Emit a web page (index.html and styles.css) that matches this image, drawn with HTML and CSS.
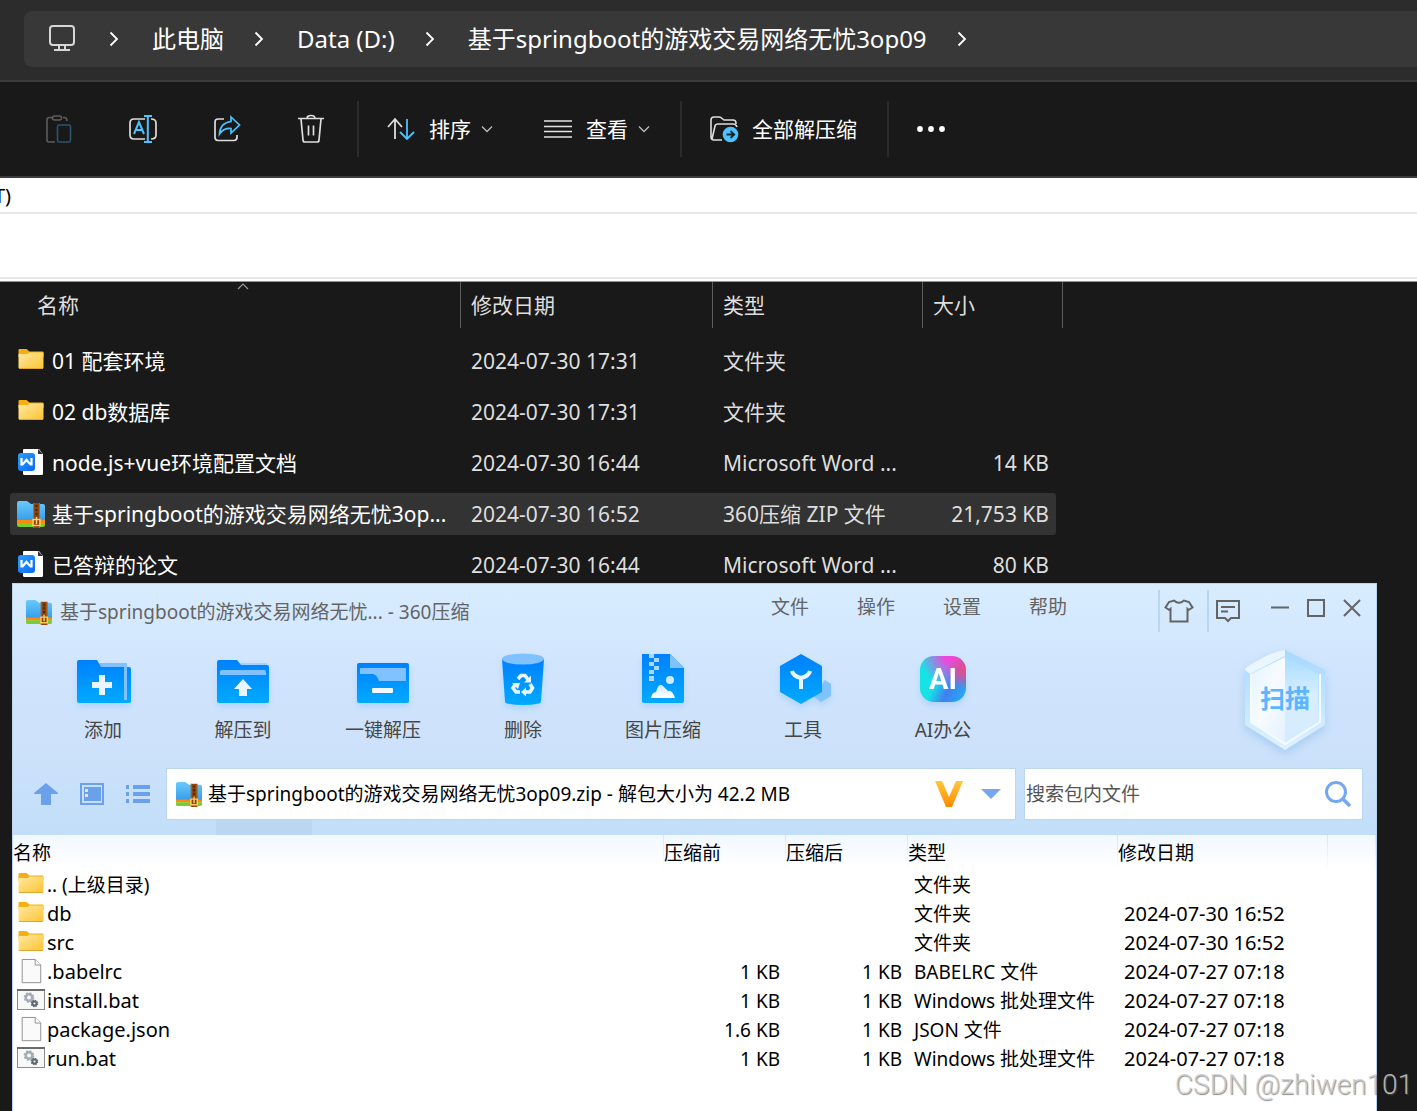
FILE: index.html
```html
<!doctype html>
<html lang="zh-CN">
	<head>
		<meta charset="utf-8">
		<title>基于springboot的游戏交易网络无忧3op09</title>
		<link rel="stylesheet" href="styles.css">
	</head>
	<body>

		<svg class="sprite" aria-hidden="true">
			<defs>
				<linearGradient id="g-folder" x1="0" y1="0" x2="1" y2="1">
					<stop offset="0" stop-color="#ffe9a2"/><stop offset="1" stop-color="#fdc433"/>
				</linearGradient>
				<linearGradient id="g-sky" x1="0" y1="0" x2="0" y2="1">
					<stop offset="0" stop-color="#69cbfb"/><stop offset="1" stop-color="#3499ea"/>
				</linearGradient>
				<linearGradient id="g-blue" x1="0" y1="0" x2="0" y2="1">
					<stop offset="0" stop-color="#0080ff"/><stop offset="1" stop-color="#00aaff"/>
				</linearGradient>
				<linearGradient id="g-word" x1="0" y1="0" x2="1" y2="1">
					<stop offset="0" stop-color="#2ba0ff"/><stop offset="1" stop-color="#0a68f5"/>
				</linearGradient>
				<linearGradient id="g-white" x1="0" y1="0" x2="0" y2="1">
					<stop offset="0" stop-color="#cfe9ff"/><stop offset="1" stop-color="#fff"/>
				</linearGradient>
				<linearGradient id="g-orange" x1="0" y1="0" x2="0" y2="1">
					<stop offset="0" stop-color="#ffc83c"/><stop offset="1" stop-color="#ff8a00"/>
				</linearGradient>
			</defs>
			<symbol id="i-next" viewBox="0 0 10 16">
				<path d="M1.500 1.500 8 8l-6.500 6.500" fill="none" stroke="#fff" stroke-width="1.800"/>
			</symbol>
			<symbol id="i-down" viewBox="0 0 12 8">
				<path d="M1 1.500l5 5 5-5" fill="none" stroke="#bbb" stroke-width="1.300"/>
			</symbol>
			<symbol id="i-folder" viewBox="0 2 28 22" overflow="visible">
				<path d="M1.500 2q0-1 1-1h7l3 2.500h13q1 0 1 1V9h-25z" fill="#f5ae14"/>
				<path d="M1.500 6h9l2-1.500h14V19.500q0 1-1 1h-23q-1 0-1-1z" fill="url(#g-folder)"/>
				<path d="M2 20.500h24" stroke="#dfa72c"/>
			</symbol>
			<symbol id="i-word" viewBox="0 0 28 28">
				<path d="M7 0h15l4 5v19.500q0 1.500-1.500 1.500h-17Q6 26 6 24.500V1q0-1 1-1z" fill="#fff"/>
				<path d="M21 0v5h5z" fill="#2b3240"/>
				<rect x="1" y="4" width="17" height="18" rx="3" fill="url(#g-word)"/>
				<path d="M4.500 9v6.500h1l4-4.500 4 4.500h1V9" fill="none" stroke="#fff" stroke-width="2.200"/>
			</symbol>
			<symbol id="i-zip" viewBox="0 0 28 28">
				<path d="M0 3q0-2 2-2h8l4 3h12q2 0 2 2v16H0z" fill="url(#g-sky)"/>
				<path d="M0 20h28v3H0z" fill="#ff8a0a"/>
				<path d="M0 23h28v2q0 2-2 2H2q-2 0-2-2z" fill="#7ecb2f"/>
				<rect x="16" y="3" width="7" height="25" fill="#8a4312"/>
				<path d="M16.500 3v25M22.500 3v25" stroke="#bd6716"/>
				<path d="M19.500 5v12" stroke="#4c2405" stroke-width="2" stroke-dasharray="2 2"/>
				<path d="M16 19.500h7v6h-7zM19.500 17v7" fill="none" stroke="#ffcb62" stroke-width="1.500"/>
			</symbol>
			<symbol id="i-file" viewBox="0 1 28 28" overflow="visible">
				<path d="M4.500 1.500h14l6 6v19h-20z" fill="#fafafa" stroke="#8a8a8a"/>
				<path d="M18.500 1.500v6h6" fill="#fff" stroke="#8a8a8a"/>
			</symbol>
			<symbol id="i-bat" viewBox="0 1 28 22" overflow="visible">
				<rect x=".5" y=".5" width="27" height="20" fill="#f8f8f8" stroke="#8b8b8b"/>
				<path d="M0 1h28" stroke="#6b6b6b" stroke-width="2"/>
				<circle cx="12" cy="8.500" r="3.200" fill="none" stroke="#a3adb8" stroke-width="2.500"/>
				<circle cx="12" cy="8.500" r="4.600" fill="none" stroke="#a3adb8" stroke-width="1.500" stroke-dasharray="2 1.600"/>
				<circle cx="17.500" cy="14.500" r="2" fill="none" stroke="#5e676e" stroke-width="1.800"/>
				<circle cx="17.500" cy="14.500" r="3.200" fill="none" stroke="#5e676e" stroke-width="1.200" stroke-dasharray="1.500 1"/>
			</symbol>
		</svg>

		<header class="address-bar">
			<nav class="crumbs" aria-label="路径">
				<svg class="pc" viewBox="0 0 28 28" fill="none" stroke="#d6d6d6" stroke-width="2"><rect x="2" y="1" width="24" height="19" rx="3"/><path d="M11 20v4M17 20v4M6 25h16"/></svg>
				<svg class="next"><use href="#i-next"/></svg>
				<button class="crumb">此电脑</button>
				<svg class="next"><use href="#i-next"/></svg>
				<button class="crumb">Data (D:)</button>
				<svg class="next"><use href="#i-next"/></svg>
				<button class="crumb">基于springboot的游戏交易网络无忧3op09</button>
				<svg class="next"><use href="#i-next"/></svg>
			</nav>
		</header>

		<div class="toolbar">
			<button class="icon-button" aria-label="粘贴" disabled>
				<svg viewBox="0 0 28 28" fill="none" stroke="#5c5c5c" stroke-width="1.600"><path d="M8 2.500H4.500Q2 2.500 2 5v20q0 2 2 2h6M18 2.500h1.500Q22 2.500 22 6"/><rect x="7.500" y="1" width="9" height="4" rx="2"/><rect x="12.500" y="10" width="13" height="17" rx="1.500" stroke="#28566f"/></svg>
			</button>
			<button class="icon-button" aria-label="重命名">
				<svg viewBox="0 0 28 28" fill="none" stroke="#ddd" stroke-width="1.700"><path d="M16 4H5Q1 4 1 8v12q0 4 4 4h11M22 4q5 0 5 4v12q0 4-5 4"/><path d="M5 19l5-12 5 12M7 15h6M18.800 1v26M15 1h8M15 27h8" stroke="#4cc2ff" stroke-width="2"/></svg>
			</button>
			<button class="icon-button" aria-label="共享">
				<svg viewBox="0 0 28 28" fill="none" stroke="#ddd" stroke-width="1.700"><path d="M11 4H5Q2 4 2 7v15q0 3.500 3 3.500h16q3 0 3-3.500v-2"/><path d="M18 2l8.500 8L18 18v-4.500Q10.500 13 6.500 19 7 8 18 6.500z" stroke="#4cc2ff"/></svg>
			</button>
			<button class="icon-button" aria-label="删除">
				<svg viewBox="0 0 28 28" fill="none" stroke="#ddd" stroke-width="1.700"><path d="M1 3.500h26M10 3.500q0-3 4-3t4 3M4 4l2 21q0 2 2 2h12q2 0 2-2l2-21M11.500 10.500v10M16.500 10.500v10"/></svg>
			</button>
			<span class="divider"></span>
			<button class="text-button">
				<svg viewBox="0 0 28 28" fill="none" stroke-width="1.800"><path d="M1 12l7-8 7 8M8 4v20" stroke="#ddd"/><path d="M13 17l7 7 7-7M20 24V4" stroke="#4cc2ff"/></svg>
				排序
				<svg class="down"><use href="#i-down"/></svg>
			</button>
			<button class="text-button">
				<svg viewBox="0 0 28 28" fill="none" stroke="#e4e4e4" stroke-width="1.600"><path d="M0 6h28M0 11.500h28M0 16.500h28M0 22h28"/></svg>
				查看
				<svg class="down"><use href="#i-down"/></svg>
			</button>
			<span class="divider"></span>
			<button class="text-button">
				<svg viewBox="0 0 28 28" fill="none" stroke="#ddd" stroke-width="1.600"><path d="M12 25H4q-3 0-3-3V5q0-3 3-3h5q1.500 0 2.500 1L14 5h9q3 0 3 3v1M2 24L5 11q.5-2 3-2h15q3 0 4 3"/><circle cx="20.500" cy="19.500" r="7.800" fill="#4cc2ff" stroke="none"/><path d="M16.500 19.500h7.500M20.500 16l3.700 3.500-3.700 3.500" stroke="#10222c" stroke-width="1.800"/></svg>
				全部解压缩
			</button>
			<span class="divider"></span>
			<button class="text-button" aria-label="更多">
				<svg viewBox="0 0 28 28" fill="#fff"><circle cx="3" cy="14" r="2.900"/><circle cx="14" cy="14" r="2.900"/><circle cx="25" cy="14" r="2.900"/></svg>
			</button>
		</div>

		<div class="strip">
			<div class="strip-title">T)</div>
			<div class="strip-body"></div>
		</div>

		<table class="files">
			<thead>
				<tr>
					<th aria-sort="ascending">名称<svg class="sorted" viewBox="0 0 12 7"><path d="M1 6l5-5 5 5" fill="none" stroke="#9a9a9a" stroke-width="1.200"/></svg></th>
					<th>修改日期</th>
					<th>类型</th>
					<th>大小</th>
				</tr>
			</thead>
			<tbody>
				<tr>
					<td class="name"><svg><use href="#i-folder"/></svg>01 配套环境</td>
					<td>2024-07-30 17:31</td>
					<td>文件夹</td>
					<td class="size"></td>
				</tr>
				<tr>
					<td class="name"><svg><use href="#i-folder"/></svg>02 db数据库</td>
					<td>2024-07-30 17:31</td>
					<td>文件夹</td>
					<td class="size"></td>
				</tr>
				<tr>
					<td class="name"><svg><use href="#i-word"/></svg>node.js+vue环境配置文档</td>
					<td>2024-07-30 16:44</td>
					<td>Microsoft Word ...</td>
					<td class="size">14 KB</td>
				</tr>
				<tr class="selected">
					<td class="name"><svg><use href="#i-zip"/></svg>基于springboot的游戏交易网络无忧3op...</td>
					<td>2024-07-30 16:52</td>
					<td>360压缩 ZIP 文件</td>
					<td class="size">21,753 KB</td>
				</tr>
				<tr>
					<td class="name"><svg><use href="#i-word"/></svg>已答辩的论文</td>
					<td>2024-07-30 16:44</td>
					<td>Microsoft Word ...</td>
					<td class="size">80 KB</td>
				</tr>
			</tbody>
		</table>

		<main class="archive">
			<div class="ribbon">
				<div class="titlebar">
					<svg class="zip"><use href="#i-zip"/></svg>
					<h1 class="title">基于springboot的游戏交易网络无忧... - 360压缩</h1>
					<nav class="menu">
						<button>文件</button>
						<button>操作</button>
						<button>设置</button>
						<button>帮助</button>
					</nav>
					<div class="skin">
						<button aria-label="皮肤"><svg viewBox="0 0 28 24"><path d="M9 1.500q5 4.500 10 0l5 1.500 3.500 5.500-4 2.500-1-1v12.500h-17V10l-1 1-4-2.500L4 3z"/></svg></button>
						<button aria-label="反馈"><svg viewBox="0 0 28 24"><path d="M3 2h22v17h-8l-3 3-3-3H3zM7 8h14M7 12.500h7"/></svg></button>
					</div>
					<div class="window-buttons">
						<button aria-label="最小化"><svg viewBox="0 0 18 18"><path d="M0 8.500h18"/></svg></button>
						<button aria-label="最大化"><svg viewBox="0 0 18 18"><path d="M1 1h16v16H1z"/></svg></button>
						<button aria-label="关闭"><svg viewBox="0 0 18 18"><path d="M1 1l16 16M17 1L1 17"/></svg></button>
					</div>
				</div>

				<div class="tools">
					<button class="tool">
						<svg viewBox="0 0 56 52"><path d="M24 5h28v12H24z" fill="#80c2ff"/><path d="M2 4q0-2 2-2h18l4 7h28q2 0 2 2v32q0 2-2 2H4q-2 0-2-2z" fill="url(#g-blue)"/><path d="M49 5h3v37h-3z" fill="#80c2ff"/><path d="M24 17h6v7h7v6h-7v7h-6v-7h-7v-6h7z" fill="#e9f6ff"/></svg>
						添加
					</button>
					<button class="tool">
						<svg viewBox="0 0 56 52"><path d="M24 5h28v5H24z" fill="#a5d2ff"/><path d="M2 4q0-2 2-2h18l4 5h26q2 0 2 2v34q0 2-2 2H4q-2 0-2-2z" fill="url(#g-blue)"/><path d="M5 17v-3q0-2 2-2h42q2 0 2 2v3z" fill="#80c2ff"/><path d="M28 21l9 10h-5v7h-8v-7h-5z" fill="#e9f6ff"/></svg>
						解压到
					</button>
					<button class="tool">
						<svg viewBox="0 0 56 52"><rect x="2" y="5" width="52" height="40" rx="2" fill="url(#g-blue)"/><path d="M5 16v-5q0-1 1-1h44q1 0 1 1v12H24q-2-6-6-7z" fill="#80c2ff"/><rect x="17" y="30" width="21" height="5" rx="1" fill="#f2faff"/></svg>
						一键解压
					</button>
					<button class="tool">
						<svg viewBox="0 0 56 52"><path d="M7 1h42l-3 42q0 2-2 2.500-16 3-32 0-2-.5-2-2.500z" fill="url(#g-blue)"/><ellipse cx="28" cy="1" rx="21" ry="5.500" fill="#80c2ff"/><g fill="none" stroke="#e9f6ff" stroke-width="3.600"><path d="M23 21l3-3.500h4l3 4M35 26l2.500 4-2.500 4h-4M25 34h-4l-3-4 2.500-4"/></g><path d="M36 17.500v7h-7zM31 29.500v9l-5-4.500zM17 25h8l-2 6z" fill="#e9f6ff"/></svg>
						删除
					</button>
					<button class="tool">
						<svg viewBox="0 0 56 52"><path d="M7-4h28l14 14v33q0 2-2 2H9q-2 0-2-2z" fill="url(#g-blue)"/><path d="M35-4l14 14H35z" fill="#80c2ff"/><path d="M14-4h5v4h-5zM19 0h5v4h-5zM14 4h5v4h-5zM19 8h5v4h-5zM14 12h5v4h-5zM14 18h5v5h-5z" fill="#a9d8ff"/><circle cx="35" cy="22" r="4" fill="#cfe9ff"/><path d="M16 40q1-6 5-6 3-10 7-6l5 5q4-2 7 7z" fill="url(#g-white)"/></svg>
						图片压缩
					</button>
					<button class="tool">
						<svg viewBox="0 0 56 52"><path d="M50 22l6 4v12l-10 6-8-6z" fill="#80c2ff"/><path d="M26-4l21 12v26L26 46 5 34V8z" fill="url(#g-blue)"/><path d="M26 31V20M17 13q1 5 9 7 8-2 9-7" fill="none" stroke="#e9f6ff" stroke-width="4"/></svg>
						工具
					</button>
					<button class="tool">
						<span class="ai">AI</span>
						AI办公
					</button>
					<button class="scan">
						<svg viewBox="0 0 84 104">
							<defs>
								<linearGradient id="g-scan" x1="0" y1="0" x2="0" y2="1"><stop offset="0" stop-color="#a6d8ff"/><stop offset="1" stop-color="#def2ff"/></linearGradient>
								<linearGradient id="g-scan-left" x1="0" y1="0" x2="1" y2="1"><stop offset="0" stop-color="#e3f4ff"/><stop offset=".5" stop-color="#f7fbff"/><stop offset="1" stop-color="#e3f2ff"/></linearGradient>
								<linearGradient id="g-scan-right" x1="0" y1="0" x2="0" y2="1"><stop offset="0" stop-color="#a8dcff"/><stop offset=".45" stop-color="#d8efff"/><stop offset="1" stop-color="#d5eaff"/></linearGradient>
							</defs>
							<path d="M42 2l40 20v55l-40 25L2 77V22z" fill="url(#g-scan)"/>
							<path d="M42 2v6L7 26l-5-4q0-2 3-4L25 7q10-4 17-5z" fill="#eaf6ff"/>
							<path d="M42 9v86L8 73V26z" fill="url(#g-scan-left)"/>
							<path d="M42 9l33 17v47L42 95z" fill="url(#g-scan-right)"/>
							<path d="M8 26v48l34 22 35-22V26" fill="none" stroke="#f4fbff" stroke-width="2"/>
						</svg>
						<span>扫描</span>
					</button>
				</div>

				<div class="path-row">
					<div class="views">
						<button aria-label="向上"><svg viewBox="0 0 24 22"><path d="M12 0l12 10v1h-7v11H7V11H0v-1z"/></svg></button>
						<button aria-label="预览"><svg viewBox="0 0 24 22"><path d="M0 0h24v22H0zM2 2v18h20V2z" fill-rule="evenodd"/><path d="M4 4h17v14H4z"/><path d="M5 6h3v3H5zM5 11h3v3H5z" fill="#dcebff"/></svg></button>
						<button aria-label="列表"><svg viewBox="0 0 24 22"><path d="M0 2h3v4H0zM7 2h17v4H7zM0 9h3v4H0zM7 9h17v4H7zM0 16h3v4H0zM7 16h17v4H7z"/></svg></button>
					</div>
					<div class="path box">
						<svg class="zip"><use href="#i-zip"/></svg>
						<input type="text" aria-label="路径" value="基于springboot的游戏交易网络无忧3op09.zip - 解包大小为 42.2 MB">
						<svg class="vip" viewBox="0 0 28 26"><path d="M0 0h7l7 16 7-16h7L17 26h-6z" fill="url(#g-orange)"/></svg>
						<button aria-label="展开"><svg class="drop" viewBox="0 0 20 10"><path d="M0 0h20L10 10z" fill="#74a7ee"/></svg></button>
					</div>
					<div class="search box">
						<input type="text" aria-label="搜索" placeholder="搜索包内文件">
						<button aria-label="搜索"><svg class="find" viewBox="0 0 28 26"><circle cx="12" cy="11" r="9.500" fill="none" stroke="#74a7ee" stroke-width="3"/><path d="M18 17l8 8" stroke="#74a7ee" stroke-width="3.500"/></svg></button>
					</div>
				</div>
				<div class="shade"></div>
			</div>

			<table class="entries">
				<colgroup>
					<col class="col-name"><col class="col-size"><col class="col-size"><col class="col-type"><col class="col-type"><col>
				</colgroup>
				<thead>
					<tr><th>名称</th><th>压缩前</th><th>压缩后</th><th>类型</th><th>修改日期</th><th></th></tr>
				</thead>
				<tbody>
					<tr><td><div class="entry"><svg><use href="#i-folder"/></svg>.. (上级目录)</div></td><td></td><td></td><td>文件夹</td><td></td><td></td></tr>
					<tr><td><div class="entry latin"><svg><use href="#i-folder"/></svg>db</div></td><td></td><td></td><td>文件夹</td><td class="latin">2024-07-30 16:52</td><td></td></tr>
					<tr><td><div class="entry latin"><svg><use href="#i-folder"/></svg>src</div></td><td></td><td></td><td>文件夹</td><td class="latin">2024-07-30 16:52</td><td></td></tr>
					<tr><td><div class="entry latin"><svg><use href="#i-file"/></svg>.babelrc</div></td><td class="num">1 KB</td><td class="num">1 KB</td><td>BABELRC 文件</td><td class="latin">2024-07-27 07:18</td><td></td></tr>
					<tr><td><div class="entry latin"><svg><use href="#i-bat"/></svg>install.bat</div></td><td class="num">1 KB</td><td class="num">1 KB</td><td>Windows 批处理文件</td><td class="latin">2024-07-27 07:18</td><td></td></tr>
					<tr><td><div class="entry latin"><svg><use href="#i-file"/></svg>package.json</div></td><td class="num">1.6 KB</td><td class="num">1 KB</td><td>JSON 文件</td><td class="latin">2024-07-27 07:18</td><td></td></tr>
					<tr><td><div class="entry latin"><svg><use href="#i-bat"/></svg>run.bat</div></td><td class="num">1 KB</td><td class="num">1 KB</td><td>Windows 批处理文件</td><td class="latin">2024-07-27 07:18</td><td></td></tr>
				</tbody>
			</table>
		</main>

		<div class="watermark">CSDN @zhiwen101</div>

	</body>
</html>
```

FILE: styles.css
```css
* {
	box-sizing: border-box;
}

body {
	position: relative;
	display: flex;
	flex-direction: column;
	min-height: 100vh;
	margin: 0;
	overflow-x: hidden;
	background: #191919;
	color: #fff;
	font: 21px/28px "Noto Sans", "Noto Sans CJK SC", sans-serif;
}

button,
input {
	margin: 0;
	padding: 0;
	border: none;
	background: none;
	color: inherit;
	font: inherit;
}

svg {
	display: block;
	flex: none;
	overflow: visible;
}

th,
td {
	padding: 0;
	text-align: left;
	font-weight: normal;
	white-space: nowrap;
}

.sprite {
	position: absolute;
	width: 0;
	height: 0;
}

/* explorer */

.address-bar {
	padding: 11px 0 13px 24px;
	background: #2c2c2c;
	border-bottom: 2px solid #3b3b3b;
}

.crumbs {
	display: flex;
	align-items: center;
	gap: 30px;
	height: 56px;
	padding-left: 24px;
	border-radius: 8px 0 0 8px;
	background: #383838;
	font-size: 24px;
	line-height: 32px;
	white-space: nowrap;
}
	.crumbs .pc {
		width: 28px;
		height: 28px;
		margin-right: 3px;
	}
	.crumbs .next {
		width: 10px;
		height: 16px;
		margin-right: 3px;
	}

.toolbar {
	display: flex;
	align-items: center;
	height: 96px;
	padding-left: 17px;
	border-bottom: 2px solid #3b3b3b;
	white-space: nowrap;
}
	.toolbar svg {
		width: 28px;
		height: 28px;
	}
	.toolbar .down {
		width: 12px;
		height: 8px;
		margin-left: -4px;
	}

.icon-button {
	display: flex;
	justify-content: center;
	width: 84px;
}

.text-button {
	display: flex;
	align-items: center;
	gap: 14px;
	padding: 0 26px 0 25px;
}

.divider {
	width: 2px;
	height: 56px;
	margin: 0 3px 0 4px;
	background: #2b2b2b;
}

.strip {
	height: 104px;
	background: #fff;
	border-bottom: 1px solid #8f9392;
	color: #000;
}
	.strip-title {
		height: 36px;
		border-bottom: 2px solid #e7e7e7;
		font-size: 20px;
		line-height: 36px;
		text-indent: -6px;
	}
	.strip-body {
		height: 65px;
		border-bottom: 2px solid #e7e7e7;
	}

.files {
	display: block;
	margin-left: 10px;
	color: #dedede;
}
	.files thead,
	.files tbody {
		display: block;
	}
	.files tr {
		display: grid;
		grid-template-columns: 451px 252px 210px 133px;
		align-items: center;
		width: max-content;
		height: 42px;
		margin-bottom: 9px;
		border-radius: 3px;
	}
	.files thead tr {
		grid-template-columns: 451px 252px 210px 140px;
		align-items: stretch;
		height: 46px;
		margin-bottom: 12px;
	}
	.files th {
		position: relative;
		padding-left: 10px;
		border-right: 1px solid #5d5d5d;
		line-height: 46px;
	}
	.files th:first-child {
		padding-left: 27px;
	}
	.files td {
		padding-left: 10px;
	}
	.files .name {
		display: flex;
		align-items: center;
		gap: 7px;
		padding-left: 7px;
		color: #fff;
	}
	.files .name svg {
		width: 28px;
		height: 28px;
	}
	.files .size {
		padding-right: 7px;
		text-align: right;
	}
	.files .selected {
		background: #333;
	}
	.files .sorted {
		position: absolute;
		top: 1px;
		left: 227px;
		width: 12px;
		height: 7px;
	}

/* archive window, lies over the last row of the list */

.archive {
	position: relative;
	flex: 1;
	margin: -12px 40px 0 12px;
	border: 1px solid #b9d5f0;
	border-bottom: none;
	background: #fff;
	color: #000;
	font-size: 19px;
	line-height: 26px;
}

.ribbon {
	background: linear-gradient(#d8ecff, #d0e5fd 35%, #cde2fa 65%, #c2def9);
}

.titlebar {
	display: flex;
	align-items: center;
	height: 56px;
	padding: 0 15px 0 12px;
	color: #646464;
}

.zip {
	width: 28px;
	height: 26px;
}

.title {
	flex: 1;
	margin: 0 0 0 7px;
	font-size: 19px;
	font-weight: normal;
	white-space: nowrap;
}

.menu {
	display: flex;
	gap: 48px;
	padding: 0 91px 10px 0;
}

.skin {
	display: flex;
	margin-bottom: 3px;
}
	.skin button {
		width: 49px;
		height: 42px;
		padding-left: 5px;
		border-left: 2px solid #b8d6f2;
	}
	.skin svg {
		width: 28px;
		height: 24px;
	}
	.skin path,
	.window-buttons path {
		fill: none;
		stroke: #646464;
		stroke-width: 2;
	}

.window-buttons {
	display: flex;
	gap: 18px;
	padding: 0 0 8px 15px;
}
	.window-buttons svg {
		width: 18px;
		height: 18px;
	}

.tools {
	display: flex;
	height: 128px;
	padding: 0 44px 0 20px;
}

.tool {
	display: flex;
	flex-direction: column;
	align-items: center;
	width: 140px;
	height: 104px;
	padding-top: 18px;
	gap: 7px;
	color: #464646;
	line-height: 26px;
}
	.tool svg,
	.ai {
		width: 56px;
		height: 52px;
		filter: drop-shadow(0 4px 3px rgba(60, 150, 240, 0.2));
	}
	.ai {
		width: 46px;
		height: 46px;
		margin: -2px 0 8px;
		border-radius: 14px;
		background:
			radial-gradient(circle at 100% 30%, #f2487c, rgba(242, 72, 124, 0) 35%),
			radial-gradient(circle at 65% 0, #ee46dc 10%, rgba(226, 70, 230, 0) 55%),
			linear-gradient(115deg, #17e3e6 40%, #3f7ff2 65%, #1fb4f4);
		color: #fff;
		font: bold 29px/46px Roboto, sans-serif;
		text-align: center;
	}

.scan {
	position: relative;
	width: 84px;
	height: 104px;
	margin: 8px 5px 0 auto;
	color: #5cb5ff;
	font-size: 25px;
	font-weight: bold;
}
	.scan svg {
		width: 84px;
		height: 104px;
		filter: drop-shadow(0 4px 5px rgba(80, 150, 230, 0.3));
	}
	.scan span {
		position: absolute;
		top: 37px;
		left: 0;
		width: 100%;
		text-align: center;
	}

.path-row {
	display: flex;
	gap: 8px;
	padding-right: 13px;
}

.views {
	display: flex;
	align-items: center;
	gap: 22px;
	width: 145px;
	padding-left: 21px;
}
	.views svg {
		width: 24px;
		height: 22px;
		fill: #6ba1eb;
	}

.box {
	display: flex;
	align-items: center;
	height: 52px;
	border: 1px solid #b8d6f2;
	background: #fff;
}
	.box input {
		flex: 1;
		min-width: 0;
		outline: none;
	}
	.box input::placeholder {
		color: #555;
		opacity: 1;
	}

.path {
	flex: 1;
	padding: 0 14px 0 8px;
}
	.path input {
		margin-left: 5px;
	}
	.vip {
		width: 28px;
		height: 26px;
		margin-right: 18px;
	}
	.drop {
		width: 20px;
		height: 10px;
	}

.search {
	width: 339px;
	padding: 0 10px 0 1px;
}
	.find {
		width: 28px;
		height: 26px;
	}

.shade {
	width: 96px;
	height: 15px;
	margin-left: 203px;
	background: #bad6f1;
}

.entries {
	width: 100%;
	table-layout: fixed;
	border-collapse: collapse;
}
	.col-name {
		width: 651px;
	}
	.col-size {
		width: 122px;
	}
	.col-type {
		width: 210px;
	}
	.entries thead {
		background: linear-gradient(#f1f8ff, #fff 90%);
	}
	.entries th {
		height: 35px;
		background: linear-gradient(#cfe6fb, #fff) right / 1px 100% no-repeat;
	}
	.entries td {
		height: 29px;
		padding-left: 6px;
	}
	.entries td:first-child {
		padding-left: 4px;
	}
	.entries .latin {
		font-size: 20px;
	}
	.entries .num {
		padding: 0 6px 0 0;
		text-align: right;
	}
	.entry {
		display: flex;
		align-items: center;
		gap: 2px;
	}
	.entry svg {
		width: 28px;
		height: 26px;
	}

.watermark {
	position: absolute;
	right: 4px;
	bottom: 8px;
	color: rgba(205, 205, 205, 0.85);
	font: 300 28px/36px Roboto, sans-serif;
	text-shadow: 1px 1px 1px rgba(90, 90, 90, 0.7);
}
```
